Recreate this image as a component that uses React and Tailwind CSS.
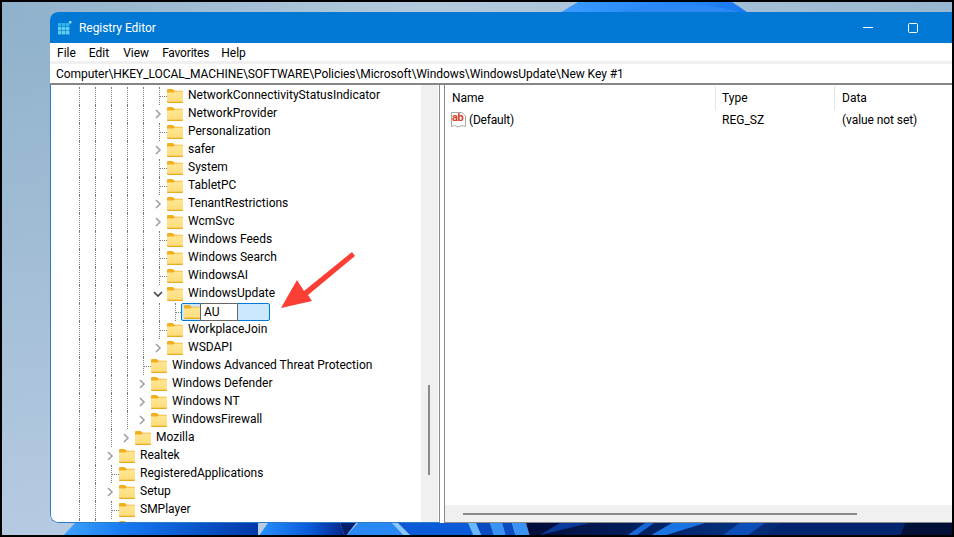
import React from "react";

const rows = [
  ["NetworkConnectivityStatusIndicator", 6, "stub"],
  ["NetworkProvider", 6, "chev"],
  ["Personalization", 6, "stub"],
  ["safer", 6, "chev"],
  ["System", 6, "stub"],
  ["TabletPC", 6, "stub"],
  ["TenantRestrictions", 6, "chev"],
  ["WcmSvc", 6, "chev"],
  ["Windows Feeds", 6, "stub"],
  ["Windows Search", 6, "stub"],
  ["WindowsAI", 6, "stub"],
  ["WindowsUpdate", 6, "open"],
  ["AU", 7, "edit"],
  ["WorkplaceJoin", 6, "stub"],
  ["WSDAPI", 6, "chev"],
  ["Windows Advanced Threat Protection", 5, "stub"],
  ["Windows Defender", 5, "chev"],
  ["Windows NT", 5, "chev"],
  ["WindowsFirewall", 5, "chev"],
  ["Mozilla", 4, "chev"],
  ["Realtek", 3, "chev"],
  ["RegisteredApplications", 3, "stub"],
  ["Setup", 3, "chev"],
  ["SMPlayer", 3, "stub"],
  ["", 3, "chev"],
];

function Folder() {
  return (
    <svg width="16" height="14" viewBox="0 0 16 14" className="shrink-0">
      <path d="M0 1.2C0 .5.5 0 1.2 0H5.6L7.6 1.8H14.8C15.5 1.8 16 2.3 16 3V5H0Z" fill="#f2ae1c" />
      <path d="M0 3.4H6.6L8 2.6H16V12.6C16 13.4 15.5 14 14.7 14H1.3C.5 14 0 13.4 0 12.6Z" fill="url(#fg)" />
      <path d="M0 12.7H16C16 13.5 15.5 14 14.7 14H1.3C.5 14 0 13.5 0 12.7Z" fill="#eaa921" />
      <defs>
        <linearGradient id="fg" x1="0" y1="0" x2="0" y2="1">
          <stop offset="0" stopColor="#ffe695" />
          <stop offset="1" stopColor="#fddc78" />
        </linearGradient>
      </defs>
    </svg>
  );
}

function Chevron({ open }) {
  return (
    <svg width="10" height="10" viewBox="0 0 10 10" className="shrink-0">
      {open ? (
        <path d="M1 3L5 7L9 3" fill="none" stroke="#444" strokeWidth="1.6" />
      ) : (
        <path d="M3 1L7 5L3 9" fill="none" stroke="#a0a0a0" strokeWidth="1.6" />
      )}
    </svg>
  );
}

function Guide() {
  return <div className="w-4 h-full shrink-0 border-l border-dotted border-[#7a7a7a]" />;
}

function Lead({ kind }) {
  if (kind === "chev" || kind === "open") {
    return (
      <div className="w-2 h-full shrink-0 flex items-center">
        <div className="-ml-[6px]">
          <Chevron open={kind === "open"} />
        </div>
      </div>
    );
  }
  return (
    <div className="w-2 h-full shrink-0 flex items-center border-l border-dotted border-[#7a7a7a]">
      <div className="w-[7px] border-t border-dotted border-[#7a7a7a]" />
    </div>
  );
}

function Row({ name, level, kind }) {
  const guides = Array.from({ length: level - 1 });
  return (
    <div className="h-[18px] flex items-center shrink-0 pl-[28px]">
      {guides.map((_, i) => (
        <Guide key={i} />
      ))}
      <Lead kind={kind} />
      {kind === "edit" ? (
        <div className="relative flex items-center h-[18px] w-[89px] -ml-[2px] pl-[2px] bg-[#cce8ff] border border-[#0078d4] rounded-[2px] box-border">
          <Folder />
          <div className="h-[18px] w-[38px] -my-px bg-white border border-[#666] pl-[3px] flex items-center">{name}</div>
        </div>
      ) : (
        <>
          <Folder />
          {name && <span className="ml-[5px] whitespace-nowrap -translate-y-px">{name}</span>}
        </>
      )}
    </div>
  );
}

function AbIcon() {
  return (
    <div className="relative w-[15px] h-[16px] shrink-0">
      <svg width="15" height="16" viewBox="0 0 15 16" className="absolute inset-0">
        <path d="M.5.5H11L14.5 4V14.5L11 13.5L7 15L3.5 13.5L.5 14.5Z" fill="#fff" stroke="#a8a8a8" />
      </svg>
      <span className="absolute left-[1px] -top-[1px] text-[11px] leading-[14px] font-bold text-[#d83b1c] tracking-[-0.5px]">ab</span>
    </div>
  );
}

function RegIcon() {
  const cells = [];
  for (let y = 0; y < 3; y++) for (let x = 0; x < 3; x++) cells.push([x, y]);
  return (
    <svg width="14" height="14" viewBox="0 0 14 14" className="shrink-0">
      {cells.map(([x, y]) => (
        <rect key={`${x}${y}`} x={x * 4} y={2 + y * 4} width="3.4" height="3.4" fill={y === 0 ? "#35b6e8" : "#5fd0ee"} />
      ))}
      <rect x="11" y="0" width="2.4" height="2.4" fill="#8fe2f5" />
    </svg>
  );
}

function Wallpaper() {
  return (
    <svg width="954" height="537" viewBox="0 0 954 537" className="absolute inset-0">
      <defs>
        <linearGradient id="wp" x1="0" y1="0" x2="0.25" y2="1">
          <stop offset="0" stopColor="#8fb1cb" />
          <stop offset="1" stopColor="#b8cce2" />
        </linearGradient>
        <linearGradient id="top" x1="0" y1="0" x2="1" y2="0">
          <stop offset="0" stopColor="#8fb1cb" />
          <stop offset="0.45" stopColor="#b3cadd" />
          <stop offset="1" stopColor="#98b7d0" />
        </linearGradient>
        <linearGradient id="blob" x1="0" y1="0" x2="1" y2="0">
          <stop offset="0" stopColor="#3a9bff" />
          <stop offset="1" stopColor="#1a78f0" />
        </linearGradient>
        <linearGradient id="b1" x1="0" y1="0" x2="1" y2="0">
          <stop offset="0" stopColor="#3ea4ff" />
          <stop offset="0.35" stopColor="#1575ee" />
          <stop offset="1" stopColor="#0038a8" />
        </linearGradient>
        <linearGradient id="b2" x1="0" y1="0" x2="1" y2="0">
          <stop offset="0" stopColor="#2a92ff" />
          <stop offset="0.6" stopColor="#0a5ad8" />
          <stop offset="1" stopColor="#03278a" />
        </linearGradient>
        <linearGradient id="b3" x1="0" y1="0" x2="1" y2="0">
          <stop offset="0" stopColor="#020c3a" />
          <stop offset="0.5" stopColor="#04307f" />
          <stop offset="1" stopColor="#020c3a" />
        </linearGradient>
      </defs>
      <rect x="0" y="0" width="954" height="537" fill="url(#wp)" />
      <rect x="0" y="0" width="954" height="14" fill="url(#top)" />
      <path d="M558 14L578 2H732L750 14Z" fill="url(#blob)" />
      <path d="M610 14Q650 3 700 5Q730 8 745 14Z" fill="#2b88f4" />
      <path d="M62 537L75 523H258V537Z" fill="url(#b1)" />
      <path d="M258 537L268 523H340L345 537Z" fill="url(#b2)" />
      <path d="M340 523H356L345 537Z" fill="#031f70" />
      <path d="M345 537L358 523H392L408 537Z" fill="#2a88f4" />
      <path d="M392 523H398L412 537H405Z" fill="#8cc8ff" />
      <path d="M398 523H470L480 537H412Z" fill="#0b5bd8" />
      <path d="M468 523H476L482 537H474Z" fill="#6ab8ff" />
      <path d="M476 523H490L496 537H482Z" fill="#0a4cc0" />
      <path d="M490 523H502L506 537H494Z" fill="#3a92f2" />
      <path d="M502 523H512L516 537H506Z" fill="#0a4cc0" />
      <path d="M512 523H526L530 537H516Z" fill="#3a92f2" />
      <path d="M526 523H954V537H530Z" fill="url(#b3)" />
      <path d="M560 523H590L540 535Z" fill="#0a3a9a" />
      <path d="M625 537L645 523H654L634 537Z" fill="#1668d8" />
      <path d="M648 537L672 523H705L660 537Z" fill="#1a74e4" />
      <path d="M720 537L740 523H765L745 537Z" fill="#0d4fb8" />
      <path d="M765 537L780 523H954V537Z" fill="#03256e" />
      <path d="M905 523H954V537H900Z" fill="#021038" />
    </svg>
  );
}

export default function App() {
  return (
    <div className="relative w-[954px] h-[537px] overflow-hidden bg-black" style={{ fontFamily: 'Roboto, sans-serif' }}>
      <Wallpaper />
      {/* screen frame */}
      <div className="absolute inset-0 border-2 border-black pointer-events-none z-10" />
      {/* window */}
      <div className="absolute left-[50px] top-[12px] w-[903px] h-[511px] flex flex-col rounded-l-[8px] overflow-hidden bg-white text-[12px] leading-[18px] text-black">
        <div className="h-[31px] shrink-0 bg-[#0078d4] flex items-center pl-[8px] text-white">
          <RegIcon />
          <span className="ml-[7px] tracking-[-0.05px]">Registry Editor</span>
          <div className="ml-auto flex items-center mr-[35px] gap-[35px]">
            <div className="w-[10px] h-px bg-white" />
            <div className="w-[10px] h-[10px] border border-white rounded-[1.5px]" />
          </div>
        </div>
        <div className="h-[18px] shrink-0 flex items-center pl-[7px] translate-y-px">
          <span className="mr-[13px]">File</span>
          <span className="mr-[14px]">Edit</span>
          <span className="mr-[13px]">View</span>
          <span className="mr-[12px] tracking-[-0.2px]">Favorites</span>
          <span>Help</span>
        </div>
        <div className="h-[3px] shrink-0 bg-[#f0f0f0]" />
        <div className="h-[19px] shrink-0 flex items-center pl-[6px] whitespace-nowrap tracking-[-0.06px]">
          Computer\HKEY_LOCAL_MACHINE\SOFTWARE\Policies\Microsoft\Windows\WindowsUpdate\New Key #1
        </div>
        <div className="h-[2px] shrink-0 bg-[#868686]" />
        <div className="flex-1 min-h-0 flex">
          <div className="flex-1 min-w-0 flex border-l border-[#2b7cc4] border-b border-b-[#2b7cc4] rounded-bl-[8px]">
            <div className="flex-1 min-w-0 flex flex-col overflow-hidden pt-[2px]">
              {rows.map(([name, level, kind], i) => (
                <Row key={i} name={name} level={level} kind={kind} />
              ))}
            </div>
            <div className="w-[17px] shrink-0 bg-[#f0f0f0] pl-[7px] pt-[300px]">
              <div className="w-[2px] h-[90px] bg-[#8a8a8a]" />
            </div>
            <div className="w-px shrink-0" />
          </div>
          <div className="w-[6px] shrink-0 border-x border-[#8a8a8a] bg-white" />
          <div className="w-[508px] shrink-0 flex flex-col border-b border-[#8a8a8a]">
            <div className="h-[25px] shrink-0 flex items-stretch">
              <div className="w-[271px] pl-[7px] flex items-center border-r border-[#e5e5e5] mt-[1px]">Name</div>
              <div className="w-[119px] pl-[6px] flex items-center border-r border-[#e5e5e5] mt-[1px]">Type</div>
              <div className="pl-[7px] flex items-center mt-[1px]">Data</div>
            </div>
            <div className="h-[20px] shrink-0 flex items-center">
              <div className="w-[271px] pl-[6px] flex items-center gap-[3px]">
                <AbIcon />
                <span className="tracking-[-0.2px]">(Default)</span>
              </div>
              <div className="w-[119px] pl-[6px]">REG_SZ</div>
              <div className="pl-[7px] tracking-[-0.07px]">(value not set)</div>
            </div>
            <div className="flex-1" />
            <div className="h-[17px] shrink-0 bg-[#f0f0f0] pl-[18px] flex items-center">
              <div className="w-[394px] h-[2px] bg-[#8a8a8a]" />
            </div>
          </div>
        </div>
      </div>
      {/* annotation arrow */}
      <svg width="954" height="537" viewBox="0 0 954 537" className="absolute inset-0 z-20 pointer-events-none">
        <path d="M281 308L297 280L304 291L352 252L355 256L308 295L312 301Z" fill="#fb3f35" />
      </svg>
    </div>
  );
}
